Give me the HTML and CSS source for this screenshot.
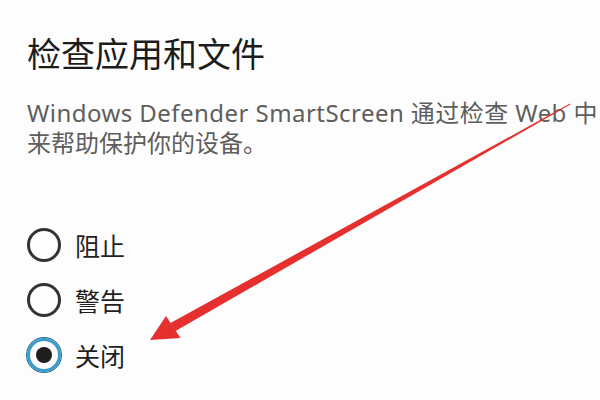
FILE: index.html
```html
<!DOCTYPE html>
<html lang="zh-CN">
<head>
<meta charset="utf-8">
<title>检查应用和文件</title>
<link rel="stylesheet" href="styles.css">
</head>
<body>
<main class="panel">
  <h1 class="title">检查应用和文件</h1>
  <p class="desc">
    <span class="desc-line wide">Windows Defender SmartScreen 通过检查 Web 中</span>
    <span class="desc-line">来帮助保护你的设备。</span>
  </p>
  <div class="options" role="radiogroup">
    <label class="option"><span class="radio"></span><span class="option-text">阻止</span></label>
    <label class="option"><span class="radio"></span><span class="option-text">警告</span></label>
    <label class="option"><span class="radio checked"></span><span class="option-text">关闭</span></label>
  </div>
</main>
<svg class="callout" width="600" height="400" viewBox="0 0 600 400" aria-hidden="true">
  <polygon class="arrow" points="570,103.6 570.4,104.4 175.5,331 170.5,323"/>
  <polygon class="arrow" points="150,340 166,316 180.5,338"/>
</svg>
</body>
</html>
```
FILE: styles.css
```css
html, body {
  margin: 0;
  padding: 0;
  background: #fdfdfd;
  width: 600px;
  height: 400px;
  overflow: hidden;
}

body {
  position: relative;
  font-family: "Noto Sans", "Noto Sans CJK SC", sans-serif;
}

.panel {
  display: flex;
  flex-direction: column;
  padding: 30px 0 0 27px;
}

.title {
  margin: 0;
  font-family: "Noto Sans CJK SC", sans-serif;
  font-weight: 400;
  font-size: 34px;
  line-height: 46px;
  color: #1c1c1c;
}

.desc {
  margin: 22px 0 0;
  display: flex;
  flex-direction: column;
  font-size: 24px;
  line-height: 30px;
  color: #5e5e5e;
}

.desc-line {
  white-space: nowrap;
}

.desc-line.wide {
  letter-spacing: 0.45px;
}

.options {
  display: flex;
  flex-direction: column;
  gap: 21px;
  margin-top: 70px;
}

.option {
  display: flex;
  align-items: center;
  gap: 14px;
  height: 34px;
}

.radio {
  box-sizing: border-box;
  width: 34px;
  height: 34px;
  border: 3px solid #333;
  border-radius: 50%;
  display: flex;
  align-items: center;
  justify-content: center;
}

.radio.checked {
  border-color: #3a9bcc;
  box-shadow: 0 0 0 1px #2a6f90;
}

.radio.checked::after {
  content: "";
  width: 16px;
  height: 16px;
  border-radius: 50%;
  background: #1f1f1f;
}

.option-text {
  font-family: "Noto Sans CJK SC", sans-serif;
  font-size: 25px;
  color: #1f1f1f;
}

.callout {
  position: absolute;
  left: 0;
  top: 0;
}

.arrow {
  fill: #e5302f;
}
```
